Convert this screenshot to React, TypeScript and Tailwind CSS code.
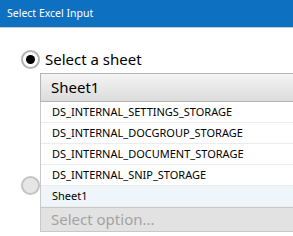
import React from "react";

function Radio({ checked }: { checked?: boolean }) {
  return (
    <div
      className={
        "flex h-[19px] w-[19px] shrink-0 items-center justify-center rounded-full border-2 " +
        (checked ? "border-[#b3b3b3] bg-white" : "border-[#c4c4c4] bg-[#e6e6e6]")
      }
    >
      {checked && <div className="h-[9px] w-[9px] rounded-full bg-black" />}
    </div>
  );
}

const items = [
  "DS_INTERNAL_SETTINGS_STORAGE",
  "DS_INTERNAL_DOCGROUP_STORAGE",
  "DS_INTERNAL_DOCUMENT_STORAGE",
  "DS_INTERNAL_SNIP_STORAGE",
  "Sheet1",
];

export default function App() {
  return (
    <div className="h-[236px] w-[293px] overflow-hidden bg-white font-['Noto_Sans','Open_Sans',sans-serif] text-black">
      <div className="box-border flex h-[28px] items-center border-b border-[#c9c9c9] bg-[#0e70c0] pl-[7px] text-[10.5px] text-white">
        Select Excel Input
      </div>
      <div className="pt-[22px]">
        <div className="flex h-[19px] items-center gap-[5px] pl-[21px]">
          <Radio checked />
          <span className="text-[15px] leading-none">Select a sheet</span>
        </div>
        <div className="ml-[40px] mt-[4px] box-border flex h-[29px] w-[280px] items-center border border-[#b4b4b4] bg-gradient-to-b from-[#f4f4f4] to-[#dcdcdc] pl-[10px] text-[15px]">
          Sheet1
        </div>
        <div className="relative pt-[74px]">
          <div className="flex h-[19px] items-center pl-[21px]">
            <Radio />
          </div>
          <div className="ml-[40px] mt-[12px] box-border flex h-[25px] w-[280px] items-center border border-[#c8c8c8] bg-[#e2e2e2] pl-[10px] text-[15px] text-[#a3a3a3]">
            Select option...
          </div>
          <div className="absolute left-[40px] top-0 w-[280px] border-x border-[#c8c8c8] bg-white">
            {items.map((t, i) => (
              <div
                key={t + i}
                className={
                  "box-border flex h-[21px] items-center border-b border-[#ececec] pl-[11px] text-[11px] " +
                  (i === items.length - 1 ? "bg-[#eef6fb]" : "")
                }
              >
                {t}
              </div>
            ))}
          </div>
        </div>
      </div>
    </div>
  );
}
